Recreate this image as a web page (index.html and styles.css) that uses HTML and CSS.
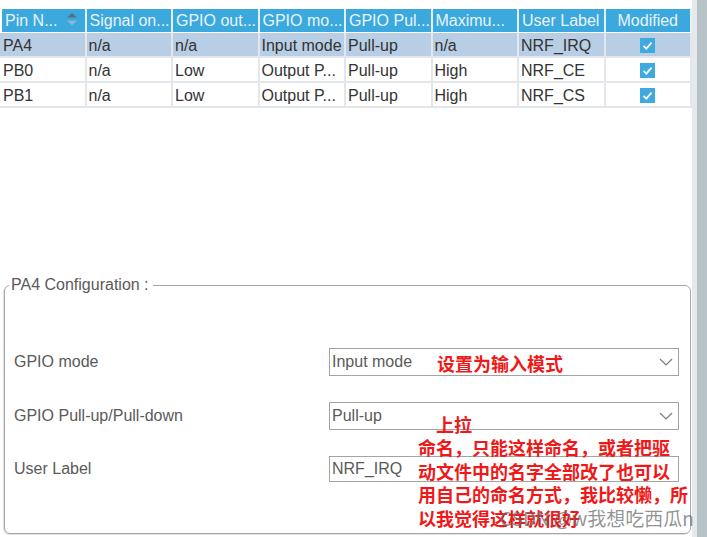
FILE: index.html
```html
<!DOCTYPE html>
<html lang="zh-CN">
<head>
<meta charset="utf-8">
<title>Pin Configuration</title>
<link rel="stylesheet" href="styles.css">
</head>
<body>
<div class="page">
  <div class="main">
    <table class="pins">
      <colgroup>
        <col><col><col><col><col><col><col><col>
      </colgroup>
      <thead>
        <tr>
          <th class="sortable"><span>Pin N...</span>
            <svg class="sort" width="10" height="13" viewBox="0 0 10 13">
              <polygon points="0,4.5 5,0 10,4.5" fill="#5d6f7b"/>
              <polygon points="0,7.5 10,7.5 5,12.5" fill="#8bbad6"/>
            </svg>
          </th>
          <th>Signal on...</th>
          <th>GPIO out...</th>
          <th>GPIO mo...</th>
          <th>GPIO Pul...</th>
          <th>Maximu...</th>
          <th>User Label</th>
          <th class="center">Modified</th>
        </tr>
      </thead>
      <tbody>
        <tr class="selected">
          <td>PA4</td><td>n/a</td><td>n/a</td><td>Input mode</td><td>Pull-up</td><td>n/a</td><td>NRF_IRQ</td>
          <td class="center"><svg class="check" width="15" height="15" viewBox="0 0 15 15"><rect width="15" height="15" fill="#3eaae0"/><polyline points="3.5,7.8 6.4,10.6 11.5,4.7" fill="none" stroke="#fff" stroke-width="1.8"/></svg></td>
        </tr>
        <tr>
          <td>PB0</td><td>n/a</td><td>Low</td><td>Output P...</td><td>Pull-up</td><td>High</td><td>NRF_CE</td>
          <td class="center"><svg class="check" width="15" height="15" viewBox="0 0 15 15"><rect width="15" height="15" fill="#3eaae0"/><polyline points="3.5,7.8 6.4,10.6 11.5,4.7" fill="none" stroke="#fff" stroke-width="1.8"/></svg></td>
        </tr>
        <tr>
          <td>PB1</td><td>n/a</td><td>Low</td><td>Output P...</td><td>Pull-up</td><td>High</td><td>NRF_CS</td>
          <td class="center"><svg class="check" width="15" height="15" viewBox="0 0 15 15"><rect width="15" height="15" fill="#3eaae0"/><polyline points="3.5,7.8 6.4,10.6 11.5,4.7" fill="none" stroke="#fff" stroke-width="1.8"/></svg></td>
        </tr>
      </tbody>
    </table>

    <fieldset class="config">
      <legend>PA4 Configuration :</legend>
      <div class="form">
        <div class="label">GPIO mode</div>
        <div class="select"><span>Input mode</span>
          <svg class="chevron" width="14" height="8" viewBox="0 0 14 8"><polyline points="1,1 7,7 13,1" fill="none" stroke="#7a7a7a" stroke-width="1.2"/></svg>
        </div>
        <div class="label">GPIO Pull-up/Pull-down</div>
        <div class="select"><span>Pull-up</span>
          <svg class="chevron" width="14" height="8" viewBox="0 0 14 8"><polyline points="1,1 7,7 13,1" fill="none" stroke="#7a7a7a" stroke-width="1.2"/></svg>
        </div>
        <div class="label">User Label</div>
        <div class="input">NRF_IRQ</div>
      </div>
    </fieldset>
  </div>

  <div class="scrollbar"><div class="track"></div></div>

  <div class="note note-mode">设置为输入模式</div>
  <div class="note note-pull">上拉</div>
  <div class="note note-label">命名，只能这样命名，或者把驱<br>动文件中的名字全部改了也可以<br>用自己的命名方式，我比较懒，所<br>以我觉得这样就很好</div>
  <div class="watermark">CSDN @w我想吃西瓜n</div>
</div>
</body>
</html>
```

FILE: styles.css
```css
* {
  box-sizing: border-box;
}

html, body {
  margin: 0;
  padding: 0;
  background: #ffffff;
}

body {
  font-family: "Liberation Sans", Arial, sans-serif;
  font-size: 16px;
  color: #333333;
}

.page {
  position: relative;
  width: 707px;
  height: 537px;
  display: flex;
  overflow: hidden;
}

.main {
  width: 692px;
  display: flex;
  flex-direction: column;
}

/* pin table */
.pins {
  margin-top: 9px;
  width: 692px;
  table-layout: fixed;
  border-collapse: separate;
  border-spacing: 0;
}

.pins th {
  height: 24px;
  padding: 0 0 0 3px;
  background: #3ba8de;
  color: #e9f5fc;
  font-weight: normal;
  text-align: left;
  white-space: nowrap;
  overflow: hidden;
  border-right: 2px solid #e6f1f8;
  border-bottom: 1px solid #ffffff;
  line-height: 23px;
}

.pins th:first-child {
  border-left: 2px solid #ffffff;
}

.pins th.sortable {
  padding-right: 8px;
}

.pins th.sortable span {
  float: left;
}

.pins th .sort {
  float: right;
  margin-top: 4px;
}

.pins td {
  height: 25px;
  padding: 2px 0 0 2px;
  line-height: 21px;
  white-space: nowrap;
  overflow: hidden;
  border-right: 2px solid #e3e7ec;
  border-bottom: 2px solid #e3e7ec;
}

.pins td:first-child {
  padding-left: 3px;
}

.pins .center {
  text-align: center;
  padding-left: 0;
}

.pins .check {
  display: inline-block;
  vertical-align: middle;
  margin-top: -3px;
}

.pins tr.selected td {
  background: #b8cee4;
}

/* configuration panel */
.config {
  margin: 168px 0 0 4px;
  width: 687px;
  padding: 54px 0 51px 0;
  border: 1px solid #a7a7a7;
  border-radius: 6px;
  box-shadow: -1px 1px 0 #e2e2e2;
  min-width: 0;
}

.config legend {
  margin-left: 4px;
  padding: 0 4px 0 2px;
  font-size: 16px;
  line-height: 18px;
  color: #5a5a5a;
}

.form {
  display: grid;
  grid-template-columns: 1fr 350px;
  grid-template-rows: 28px 28px 26px;
  row-gap: 26px;
  align-items: center;
  padding: 0 11px 0 9px;
}

.label {
  color: #5a5a5a;
}

.select,
.input {
  height: 100%;
  border: 1px solid #a3a3a3;
  background: #ffffff;
  padding: 0 5px 0 2px;
  color: #5a5a5a;
  display: flex;
  align-items: center;
  justify-content: space-between;
}

.chevron {
  flex: none;
}

/* right-hand scrollbar */
.scrollbar {
  width: 15px;
  display: flex;
  background: #e6e9eb;
  padding-left: 5px;
}

.track {
  flex: 1;
  background: #b8c3c8;
}

/* red notes written over the form */
.note {
  position: absolute;
  font-family: "Noto Sans CJK SC", sans-serif;
  font-weight: bold;
  font-size: 18px;
  line-height: 23.5px;
  color: #f01818;
  white-space: nowrap;
}

.note-mode {
  left: 437px;
  top: 352px;
}

.note-pull {
  left: 436px;
  top: 413px;
}

.note-label {
  left: 418px;
  top: 436px;
}

.watermark {
  position: absolute;
  left: 500px;
  top: 506px;
  font-family: "Noto Sans CJK SC", sans-serif;
  font-size: 19px;
  line-height: 24px;
  color: rgba(105, 105, 105, 0.72);
  white-space: nowrap;
}
```
